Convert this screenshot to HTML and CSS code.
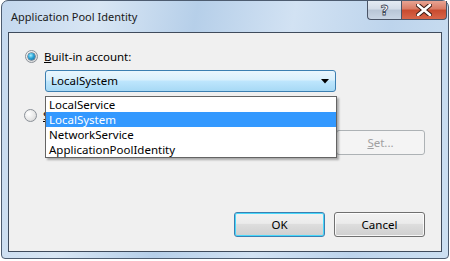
FILE: index.html
```html
<!DOCTYPE html>
<html>
<head>
<meta charset="utf-8">
<link rel="stylesheet" href="styles.css">
</head>
<body>
<div class="window">
  <div class="titlebar">
    <div class="title">Application Pool Identity</div>
    <div class="caption">
      <div class="cbtn help"><span>?</span></div>
      <div class="cbtn close">
        <svg width="16" height="12" viewBox="0 0 16 12"><path d="M2 1 L14 11 M14 1 L2 11" stroke="#3a1a14" stroke-width="4.6" stroke-linecap="round"/><path d="M2 1 L14 11 M14 1 L2 11" stroke="#ffffff" stroke-width="2.6" stroke-linecap="round"/></svg>
      </div>
    </div>
  </div>
  <div class="client">
    <div class="row r1">
      <span class="radio on"><span class="dot"></span></span>
      <span class="label"><u>B</u>uilt-in account:</span>
    </div>
    <div class="combo">
      <span class="ctext">LocalSystem</span>
      <svg class="arrow" width="8" height="5" viewBox="0 0 8 5"><path d="M0 0 H8 L4 4.5 Z" fill="#000"/></svg>
    </div>
    <div class="row r2">
      <span class="radio"></span>
      <span class="label hidden-label"><u>S</u>pecific user:</span>
    </div>
    <div class="setrow">
      <div class="btn disabled"><u>S</u>et...</div>
    </div>
    <div class="footer">
      <div class="btn ok">OK</div>
      <div class="btn">Cancel</div>
    </div>
    <div class="list">
      <div class="item">LocalService</div>
      <div class="item sel">LocalSystem</div>
      <div class="item">NetworkService</div>
      <div class="item">ApplicationPoolIdentity</div>
    </div>
  </div>
</div>
</body>
</html>
```
FILE: styles.css
```css
html, body { margin: 0; padding: 0; background: #ffffff; }
body { width: 450px; height: 261px; overflow: hidden; font-family: "Noto Sans", "Open Sans", sans-serif; font-size: 11.5px; }
.window {
  position: relative;
  width: 446px; height: 257px;
  margin: 0 0 0 1px;
  border: 1px solid #4d5c70;
  border-radius: 7px 7px 4px 4px;
  background: linear-gradient(100deg, #c4d8ee 0%, #d8e6f4 20%, #b6cfe9 40%, #d2e2f3 60%, #bdd4ec 80%, #cde0f2 100%);
  display: flex; flex-direction: column;
}
.titlebar { height: 30px; display: flex; align-items: flex-start; }
.title { padding: 8px 0 0 9px; font-size: 11px; color: #1a1a1a; }
.caption { margin-left: auto; margin-right: 1px; display: flex; }
.cbtn { height: 18px; border: 1px solid #4a5466; border-top: none; display: flex; align-items: center; justify-content: center; }
.help { width: 33px; border-radius: 0 0 0 4px; border-right: none;
  background: linear-gradient(#e4ebf3 0%, #d3dce8 45%, #b8c5d6 50%, #c9d5e4 100%); }
.help span { font-family: "DejaVu Sans", sans-serif; font-size: 14px; font-weight: bold; color: #fff; -webkit-text-stroke: 0.8px #3c4656; line-height: 1; }
.close { width: 44px; border-radius: 0 0 4px 0;
  background: linear-gradient(#e8a493 0%, #d97a63 45%, #c84a2e 50%, #d8664a 100%); }
.client {
  position: relative;
  margin: 1px 6px 6px 6px;
  height: 219px;
  border: 1px solid #3f4b5c;
  background: #f0f0f0;
  display: flex; flex-direction: column;
}
.row { display: flex; align-items: center; height: 14px; }
.r1 { margin: 17px 0 0 16px; }
.r2 { margin: 17px 0 0 15px; }
.label { margin-left: 6px; color: #000; }
.radio {
  width: 11px; height: 11px; border-radius: 50%;
  border: 1px solid #8b9198;
  background: radial-gradient(circle at 35% 35%, #ffffff 0%, #e6e6e6 60%, #c9c9c9 100%);
  display: flex; align-items: center; justify-content: center;
}
.radio .dot { width: 7px; height: 7px; border-radius: 50%;
  background: radial-gradient(circle at 40% 35%, #a6f0ff 0%, #2aa3d6 45%, #155b8c 100%);
  box-shadow: 0 0 0 0.5px #1e3f5a; }
.combo {
  margin: 6px 0 0 36px; width: 283px; height: 20px;
  border: 1px solid #3c7fb1; border-radius: 3px;
  background: linear-gradient(#eaf6fd 0%, #d9f0fc 45%, #bee6fd 50%, #a7d9f5 100%);
  display: flex; align-items: center; padding: 0 6px 0 0;
}
.ctext { margin-left: 5px; color: #000; }
.arrow { margin-left: auto; margin-top: 1px; }
.setrow { display: flex; justify-content: flex-end; margin: 7px 16px 0 0; }
.btn {
  width: 89px; height: 23px; border: 1px solid #707070; border-radius: 3px;
  background: linear-gradient(#f2f2f2 0%, #ebebeb 45%, #dddddd 50%, #cfcfcf 100%);
  display: flex; align-items: center; justify-content: center; color: #000;
  box-shadow: inset 0 0 0 1px rgba(255,255,255,0.8);
}
.btn.disabled { width: 87px; background: #f4f4f4; border-color: #adb2b5; color: #a0a0a0; box-shadow: none; }
.footer { margin-top: auto; margin-bottom: 14px; display: flex; justify-content: flex-end; gap: 9px; padding-right: 16px; }
.btn.ok { border-color: #3c7fb1; box-shadow: inset 0 0 0 1px #48d8fb; }
.list {
  position: absolute; left: 36px; top: 63px; width: 290px;
  border: 1px solid #646464; background: #fff;
  box-shadow: 2px 2px 2px rgba(0,0,0,0.3);
}
.item { height: 15px; line-height: 15px; padding-left: 3px; color: #000; }
.item.sel { background: #3399ff; color: #fff; }
```
